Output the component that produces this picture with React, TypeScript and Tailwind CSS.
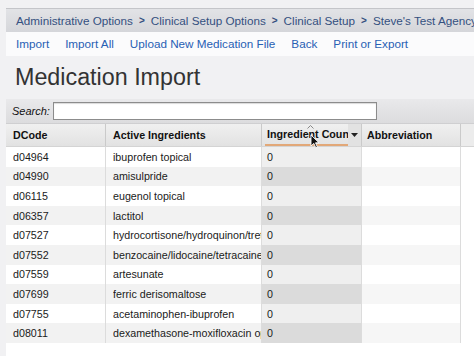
import React from "react";

const rows: [string, string][] = [
  ["d04964", "ibuprofen topical"],
  ["d04990", "amisulpride"],
  ["d06115", "eugenol topical"],
  ["d06357", "lactitol"],
  ["d07527", "hydrocortisone/hydroquinon/tretinoin"],
  ["d07552", "benzocaine/lidocaine/tetracaine"],
  ["d07559", "artesunate"],
  ["d07699", "ferric derisomaltose"],
  ["d07755", "acetaminophen-ibuprofen"],
  ["d08011", "dexamethasone-moxifloxacin ophthalmic"],
];

export default function App() {
  return (
    <div className="w-[474px] h-[356px] overflow-hidden bg-[#f1f1f3] pt-2 pl-[6px] font-['Liberation_Sans',Arial,sans-serif]">
      {/* breadcrumb */}
      <div className="h-6 border-t border-[#c4c5c9] bg-gradient-to-b from-[#e2e3e6] to-[#d5d6da] pl-[10px] flex items-center whitespace-nowrap text-[11.7px] text-[#34507f] overflow-hidden">
        <span>Administrative Options</span>
        <span className="mx-[6px] font-bold text-[10px]">&gt;</span>
        <span>Clinical Setup Options</span>
        <span className="mx-[6px] font-bold text-[10px]">&gt;</span>
        <span>Clinical Setup</span>
        <span className="mx-[6px] font-bold text-[10px]">&gt;</span>
        <span>Steve's Test Agency</span>
      </div>
      {/* nav */}
      <div className="h-6 bg-[#fbfbfc] pl-[10px] flex items-center gap-4 whitespace-nowrap text-[11.7px] text-[#2860b4]">
        <span>Import</span>
        <span>Import All</span>
        <span>Upload New Medication File</span>
        <span>Back</span>
        <span>Print or Export</span>
      </div>
      {/* title */}
      <div className="h-[43px] pl-[9px] flex items-center text-[23.3px] text-[#333]">
        Medication Import
      </div>
      {/* search */}
      <div className="h-[25px] bg-gradient-to-b from-[#e9e9eb] to-[#dcdcde] flex items-center border-b border-[#cfcfd1]">
        <span className="pl-[6px] italic text-[11px] text-[#111]">Search:</span>
        <div className="ml-[3px] w-[324px] h-[18px] bg-white border border-[#8c8c8c] shadow-[inset_0_1px_1px_rgba(0,0,0,0.15)]" />
      </div>
      {/* table */}
      <div className="bg-white text-[10.7px]">
        <div className="grid grid-cols-[100px_156px_100px_99px_1fr] h-[23px] bg-gradient-to-b from-[#f0f0f0] to-[#e2e2e2] border-b border-[#d4d4d4] font-bold text-[#111]">
          <div className="border-r border-[#cacaca] pl-[7px] flex items-center">DCode</div>
          <div className="border-r border-[#cacaca] pl-[7px] flex items-center">Active Ingredients</div>
          <div className="relative border-r border-[#cacaca] flex items-center">
            <div className="ml-[3px] w-[83px] h-full flex items-center border-b-2 border-[#e2a878] overflow-hidden whitespace-nowrap pl-[2px]">
              Ingredient Count
            </div>
            <div className="flex-1 h-full flex items-center justify-center bg-[#e2e2e2]">
              <svg width="7" height="4" viewBox="0 0 7 4">
                <path d="M0 0 L7 0 L3.5 4 Z" fill="#222" />
              </svg>
            </div>
            <svg className="absolute left-[45px] top-[1px]" width="7" height="4" viewBox="0 0 7 4">
              <path d="M0.5 3.5 L3.5 0.5 L6.5 3.5" stroke="#888" strokeWidth="1" fill="none" />
            </svg>
            <svg className="absolute left-[48px] top-[10px]" width="10" height="15" viewBox="0 0 10 15">
              <path d="M1 1 L1 12 L3.8 9.4 L5.8 13.8 L7.4 13.1 L5.5 8.8 L9 8.8 Z" fill="#111" stroke="#fff" strokeWidth="0.9" strokeLinejoin="round" />
            </svg>
          </div>
          <div className="border-r border-[#cacaca] pl-[5px] flex items-center">Abbreviation</div>
          <div className="bg-[#ececec]" />
        </div>
        {rows.map(([code, ing], i) => {
          const even = i % 2 === 1;
          return (
            <div
              key={code}
              className={`grid grid-cols-[100px_156px_100px_99px_1fr] h-[19.6px] text-[#1a1a1a] ${even ? "bg-[#f2f2f2]" : "bg-white"}`}
            >
              <div className="border-r border-[#dcdcdc] pl-[7px] flex items-center whitespace-nowrap overflow-hidden">{code}</div>
              <div className="border-r border-[#dcdcdc] pl-[7px] flex items-center whitespace-nowrap overflow-hidden">
                <span className="block w-[148px] overflow-hidden">{ing}</span>
              </div>
              <div className={`border-r border-[#dcdcdc] pl-[5px] flex items-center ${even ? "bg-[#dbdbdb]" : "bg-[#efefef]"}`}>0</div>
              <div className={`border-r border-[#dcdcdc] ${even ? "bg-[#f6f6f6]" : "bg-white"}`} />
              <div className="bg-white" />
            </div>
          );
        })}
        <div className="h-[20px] bg-white" />
      </div>
    </div>
  );
}
